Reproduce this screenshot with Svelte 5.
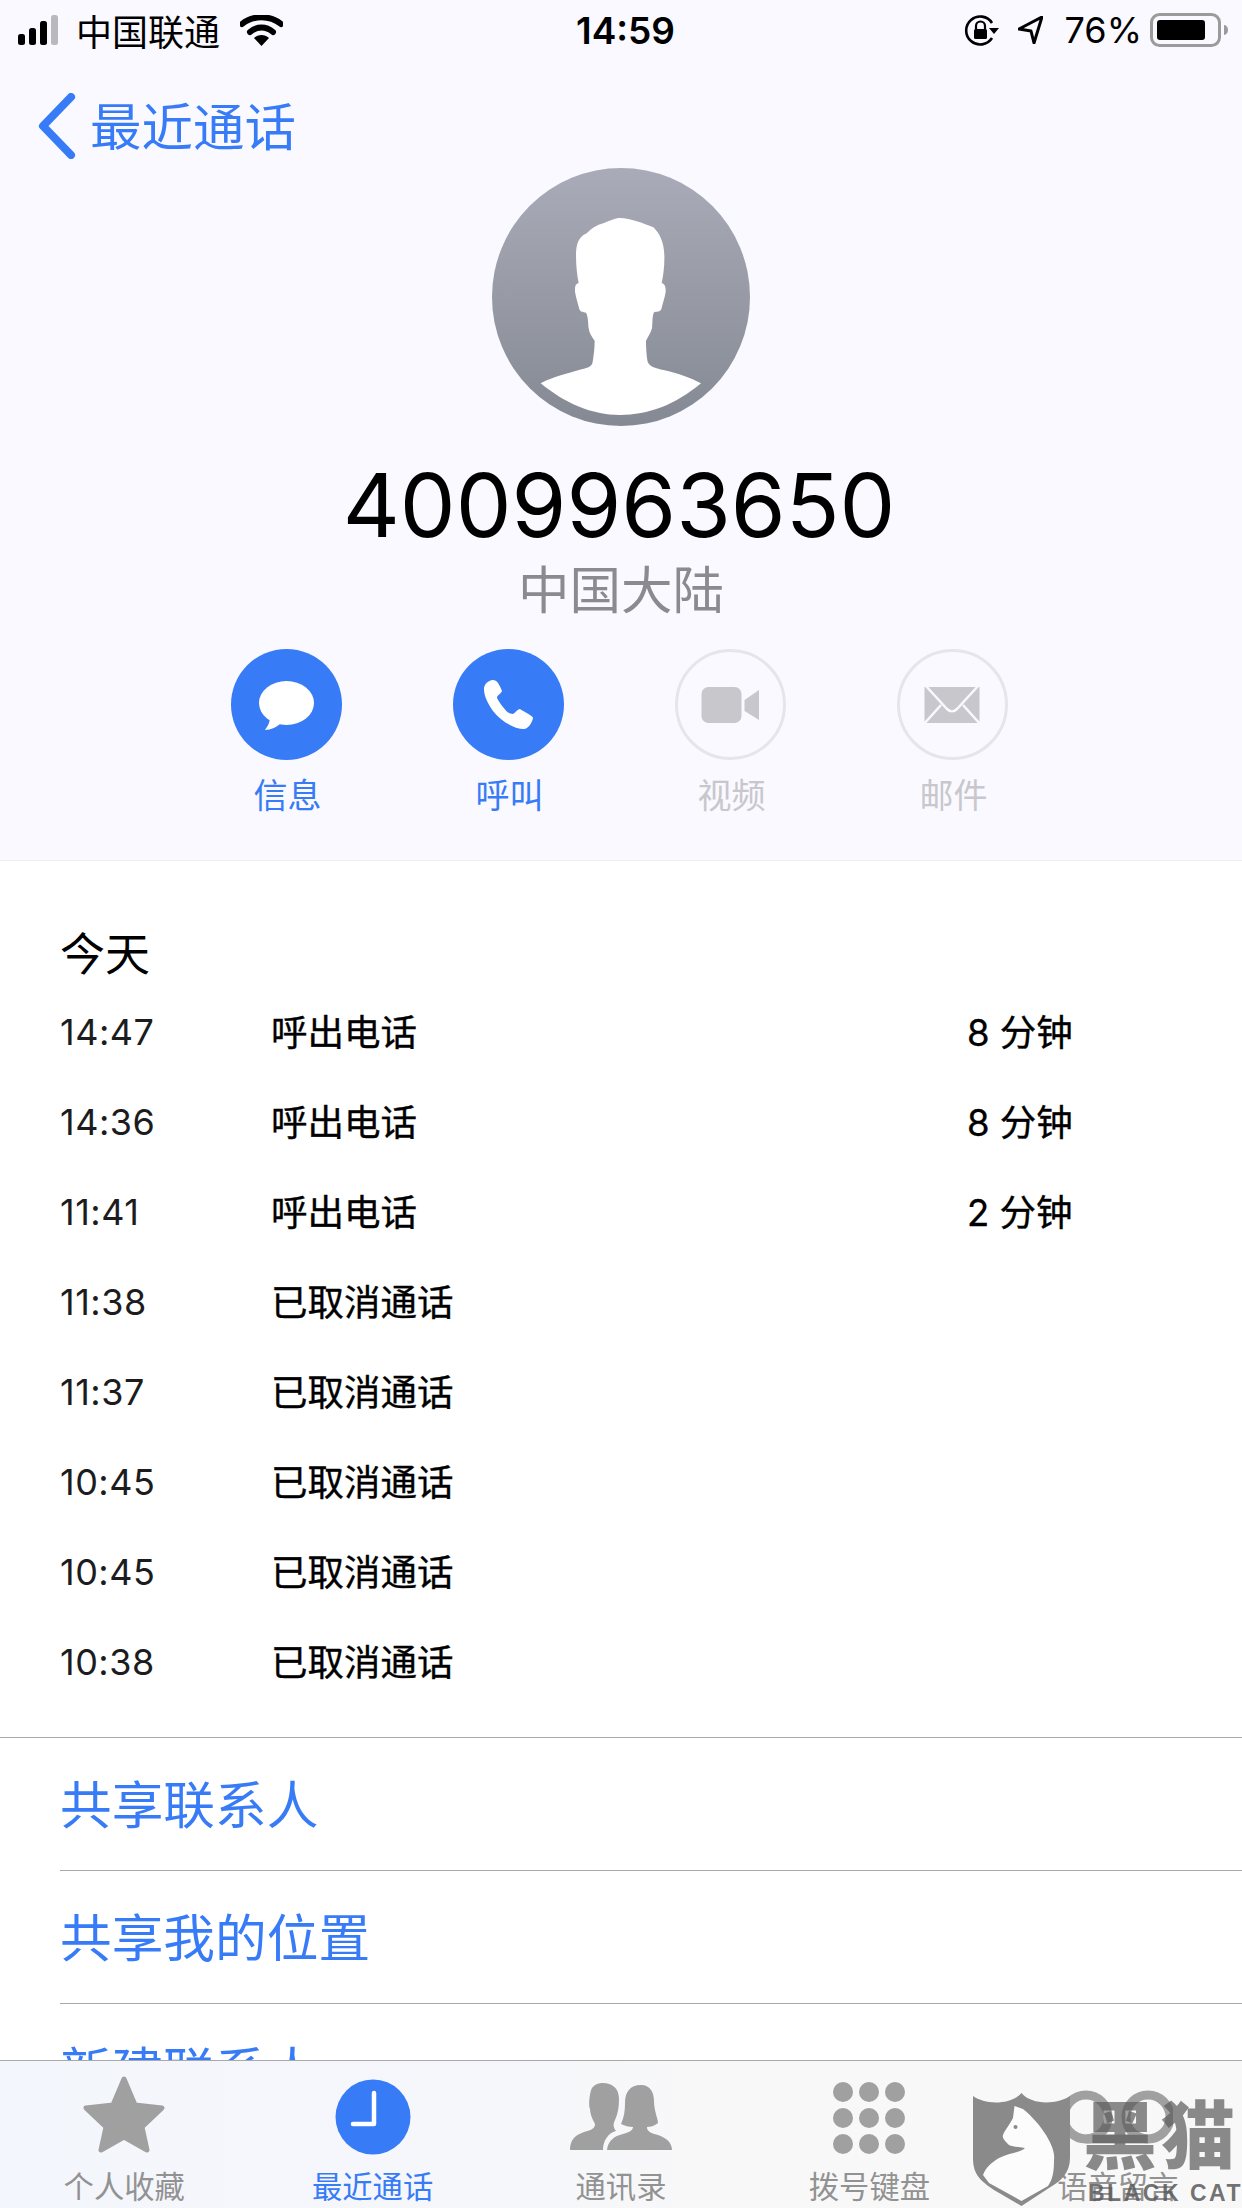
<script>
  const calls = [
    { time: '14:47', type: '呼出电话', length: '8 分钟' },
    { time: '14:36', type: '呼出电话', length: '8 分钟' },
    { time: '11:41', type: '呼出电话', length: '2 分钟' },
    { time: '11:38', type: '已取消通话', length: '' },
    { time: '11:37', type: '已取消通话', length: '' },
    { time: '10:45', type: '已取消通话', length: '' },
    { time: '10:45', type: '已取消通话', length: '' },
    { time: '10:38', type: '已取消通话', length: '' }
  ];
  const links = ['共享联系人', '共享我的位置', '新建联系人'];
  const dots = [29, 55, 81].flatMap((x) => [31, 57, 83].map((y) => ({ x, y })));
</script>

<div class="page">
  <div class="content">
    <header class="hero">
      <div class="status">
        <div class="status-left">
          <svg class="signal" width="40" height="30" viewBox="0 0 40 30">
            <rect x="0" y="19" width="7" height="11" rx="2.5" fill="#000" />
            <rect x="11" y="13" width="7" height="17" rx="2.5" fill="#000" />
            <rect x="22" y="6" width="7" height="24" rx="2.5" fill="#000" />
            <rect x="33" y="0" width="7" height="30" rx="2.5" fill="#b9b9bd" />
          </svg>
          <span class="carrier">中国联通</span>
          <svg class="wifi" width="43" height="31" viewBox="0 0 43 31">
            <path d="M2 9 C13 0 30 0 41 9" fill="none" stroke="#000" stroke-width="6" stroke-linecap="round" />
            <path d="M10 17 C17 11 26 11 33 17" fill="none" stroke="#000" stroke-width="6" stroke-linecap="round" />
            <path d="M14 23 C18 19 25 19 29 23 L21.5 31 Z" fill="#000" />
          </svg>
        </div>
        <span class="clock">14:59</span>
        <div class="status-right">
          <svg width="36" height="32" viewBox="0 0 36 32">
            <path d="M28 9 A14 14 0 1 0 28 24" fill="none" stroke="#000" stroke-width="2.6" />
            <path d="M25 14 L35 14 L30 20 Z" fill="#000" />
            <path d="M12 15 V12 a4.5 4.5 0 0 1 9 0 V15" fill="none" stroke="#000" stroke-width="2.2" />
            <rect x="10" y="15" width="13" height="10" rx="1.5" fill="#000" />
          </svg>
          <svg class="arrow" width="25" height="28" viewBox="0 0 25 28">
            <path d="M24 1 L1 13 L13 15 L16 27 Z" fill="none" stroke="#000" stroke-width="3" stroke-linejoin="round" />
          </svg>
          <span class="percent">76%</span>
          <svg width="78" height="34" viewBox="0 0 78 34">
            <rect x="1.5" y="1.5" width="68" height="31" rx="8" fill="none" stroke="#9b9b9b" stroke-width="3" />
            <rect x="7" y="7" width="48" height="20" rx="3" fill="#000" />
            <path d="M74 12 a4 5 0 0 1 0 10 Z" fill="#9b9b9b" />
          </svg>
        </div>
      </div>

      <nav class="nav">
        <svg width="38" height="66" viewBox="0 0 38 66">
          <polyline points="33,4 5,33 33,62" fill="none" stroke="#377bf7" stroke-width="8" stroke-linecap="round" stroke-linejoin="round" />
        </svg>
        <span class="nav-label">最近通话</span>
      </nav>

      <svg class="avatar" width="258" height="258" viewBox="156 54 774 774">
        <defs>
          <linearGradient id="avatar-fill" x1="0" y1="0" x2="0" y2="1">
            <stop offset="0" stop-color="#a9acb8" />
            <stop offset="1" stop-color="#858993" />
          </linearGradient>
        </defs>
        <circle cx="543" cy="441" r="387" fill="url(#avatar-fill)" />
        <path
          fill="#fff"
          d="M540 204 C570 204 610 220 640 232 C660 250 672 280 673 315 C674 345 670 375 665 400 C672 400 678 408 677 425 C674 445 668 460 664 478 C660 486 650 485 642 487 C636 500 638 520 636 535 C632 550 624 560 618 572 C618 595 620 620 623 635 C628 650 650 655 670 660 C715 670 755 685 783 700 C705 765 625 795 540 795 C455 795 375 760 302 700 C340 680 390 668 425 658 C445 652 456 650 458 635 C461 615 464 595 464 572 C455 560 448 550 446 535 C444 520 445 500 438 488 C430 486 422 488 418 478 C414 460 408 445 405 425 C404 408 408 400 416 400 C411 375 408 345 408 315 C408 285 415 260 440 250 C455 235 470 225 490 220 C510 212 525 204 540 204 Z"
        />
      </svg>

      <div class="number">4009963650</div>
      <div class="region">中国大陆</div>

      <div class="actions">
        <div class="action">
          <svg width="111" height="111" viewBox="0 0 111 111">
            <circle cx="55.5" cy="55.5" r="55.5" fill="#377bf7" />
            <ellipse cx="55.5" cy="54" rx="27.5" ry="22" fill="#fff" />
            <path d="M39 68 C39 74 36 78 34 81 C40 81 46 78 50 74 Z" fill="#fff" />
          </svg>
          <span>信息</span>
        </div>
        <div class="action">
          <svg width="111" height="111" viewBox="0 0 111 111">
            <circle cx="55.5" cy="55.5" r="55.5" fill="#377bf7" />
            <path fill="#fff" d="M39 31 C35 32 31 35 31 40 C31 47 35 55 40 62 C47 71 60 80 71 80 C75 80 79 74 80 69 C80 67 70 62 67 60 C65 60 63 63 60 65 C57 65 54 63 52.5 61 C49 57 46 53 44 49 C44 46 48 45 49 42 C48 39 45 33 43 32 C42 31 40 31 39 31 Z" />
          </svg>
          <span>呼叫</span>
        </div>
        <div class="action off">
          <svg width="111" height="111" viewBox="0 0 111 111">
            <circle cx="55.5" cy="55.5" r="54" fill="none" stroke="#e6e6ea" stroke-width="3" />
            <rect x="26.5" y="38" width="40" height="36" rx="7" fill="#c8c7cc" />
            <polygon points="69.5,51 84,41 84,71 69.5,62" fill="#c8c7cc" />
          </svg>
          <span>视频</span>
        </div>
        <div class="action off">
          <svg width="111" height="111" viewBox="0 0 111 111">
            <circle cx="55.5" cy="55.5" r="54" fill="none" stroke="#e6e6ea" stroke-width="3" />
            <rect x="27.5" y="38" width="55" height="36" fill="#c8c7cc" />
            <path d="M28 36 L50 60 C53 63 57 63 60 60 L82 36" fill="none" stroke="#f9f9ff" stroke-width="2.5" />
            <path d="M26 76 L44 56 M84 76 L66 56" fill="none" stroke="#f9f9ff" stroke-width="2.5" />
          </svg>
          <span>邮件</span>
        </div>
      </div>
    </header>

    <section class="calls">
      <h2>今天</h2>
      {#each calls as call}
        <div class="call">
          <span class="time">{call.time}</span>
          <span class="label">{call.type}</span>
          <span class="label">{call.length}</span>
        </div>
      {/each}
    </section>

    <ul class="links">
      {#each links as link}
        <li><span>{link}</span></li>
      {/each}
    </ul>
  </div>

  <footer class="tabs">
    <div class="tab">
      <svg width="110" height="108" viewBox="0 0 110 108">
        <polygon
          points="55,18 44,44 17,47 37,66 32,89 55,76 78,89 73,66 93,47 66,44"
          fill="#a0a0a0"
          stroke="#a0a0a0"
          stroke-width="5"
          stroke-linejoin="round"
        />
      </svg>
      <span>个人收藏</span>
    </div>
    <div class="tab active">
      <svg width="110" height="108" viewBox="0 0 110 108">
        <circle cx="55" cy="56" r="37.5" fill="#377bf7" />
        <path d="M56 32 V63 H35" fill="none" stroke="#fff" stroke-width="4.5" stroke-linecap="round" stroke-linejoin="round" />
      </svg>
      <span>最近通话</span>
    </div>
    <div class="tab">
      <svg width="110" height="108" viewBox="0 0 110 108">
        <g transform="translate(4 22)" fill="#a0a0a0">
          <path d="M33 0 C42 0 49 5 49 16 C49 24 48 30 45 37 C43 41 43 44 46 48 C38 50 33 58 33 67 L0 67 C0 56 6 52 14 49 C22 47 25 45 25 41 C22 36 20 30 20 26 C18 22 20 8 22 5 C25 1 29 0 33 0 Z" />
          <path d="M71 2 C80 2 84 9 84 18 C84 28 88 36 88 40 C84 43 80 44 77 44 C77 48 80 50 88 52 C97 55 102 60 102 67 L37 67 C38 58 44 53 53 51 C60 49 63 47 63 44 C59 44 55 43 51 41 C54 34 55 28 55 20 C55 9 60 2 71 2 Z" />
        </g>
      </svg>
      <span>通讯录</span>
    </div>
    <div class="tab">
      <svg width="110" height="108" viewBox="0 0 110 108">
        {#each dots as dot}
          <circle cx={dot.x} cy={dot.y} r="10" fill="#a0a0a0" />
        {/each}
      </svg>
      <span>拨号键盘</span>
    </div>
    <div class="tab">
      <svg width="110" height="108" viewBox="0 0 110 108">
        <g fill="none" stroke="#a0a0a0" stroke-width="9">
          <circle cx="23" cy="56" r="22" />
          <circle cx="85" cy="56" r="22" />
          <path d="M23 78 H85" />
        </g>
      </svg>
      <span>语音留言</span>
    </div>
  </footer>

  <div class="watermark">
    <svg class="shield" width="97" height="114" viewBox="0 0 97 114">
      <path d="M0 3 C12 12 38 12 48.5 0 C58 12 84 12 97 3 L97 65 C97 80 88 88 76 95 L48.5 113 L21 97 C8 88 0 82 0 65 Z" fill="#8a8a8a" />
      <path d="M41.5 13 L50 16 C60 24 68 34 73 42 C79 52 82 60 81 67 C81 78 80 86 75 93 L48.5 108 L16 90 L10 82 C13 74 18 70 26 65 C35 60 47 60 52 55 C46 54 40 54 36 52 C32 48 29 45 30 42 C32 37 37 31 40 25 Z" fill="#fcfcfc" />
      <circle cx="42.5" cy="34" r="2" fill="#8a8a8a" />
    </svg>
    <span class="wm-cn">黑猫</span>
    <span class="wm-en">BLACK CAT</span>
  </div>
</div>

<style>
  :global(body) {
    margin: 0;
    background: #fff;
  }

  .page {
    position: relative;
    display: flex;
    flex-direction: column;
    width: 1242px;
    height: 2208px;
    overflow: hidden;
    font-family: Inter, 'Noto Sans CJK SC', sans-serif;
    color: #000;
  }

  .content {
    flex: 1;
    min-height: 0;
    overflow: hidden;
  }

  .hero {
    display: flex;
    flex-direction: column;
    align-items: center;
    height: 860px;
    background: #f9f9ff;
    border-bottom: 1px solid #efeff3;
  }

  .status {
    position: relative;
    display: flex;
    align-items: center;
    justify-content: space-between;
    align-self: stretch;
    height: 60px;
    padding: 0 14px 0 18px;
    font-size: 36px;
  }

  .status-left,
  .status-right {
    display: flex;
    align-items: center;
  }

  .carrier {
    margin-left: 18px;
  }

  .wifi {
    margin-left: 20px;
  }

  .clock {
    position: absolute;
    left: 576px;
    font-size: 37px;
    font-weight: 600;
  }

  .arrow {
    margin-left: 18px;
  }

  .percent {
    margin: 0 8px 0 22px;
  }

  .nav {
    display: flex;
    align-items: center;
    gap: 14px;
    align-self: stretch;
    height: 68px;
    padding: 32px 0 0 38px;
    font-size: 51.5px;
    color: #377bf7;
  }

  .nav-label {
    padding-bottom: 6px;
  }

  .avatar {
    margin-top: 8px;
  }

  .number {
    margin: 28px 4px 0 0;
    font-size: 88.5px;
    line-height: 101px;
  }

  .region {
    font-size: 51.5px;
    line-height: 70px;
    color: #8a8a8f;
  }

  .actions {
    display: flex;
    justify-content: center;
    gap: 111px;
    margin: 24px 3px 0 0;
  }

  .action {
    display: flex;
    flex-direction: column;
    align-items: center;
    gap: 16px;
    font-size: 34px;
    line-height: 40px;
    color: #377bf7;
  }

  .action span {
    padding-left: 2px;
  }

  .action.off {
    color: #c8c7cc;
  }

  .calls {
    padding: 64px 0 30px 60px;
  }

  .calls h2 {
    margin: 0 0 2px;
    font-size: 45px;
    font-weight: 400;
    line-height: 60px;
  }

  .call {
    display: grid;
    grid-template-columns: 211px 696px 1fr;
    align-items: center;
    height: 90px;
    font-size: 36px;
  }

  .time {
    letter-spacing: 0.5px;
    color: #1c1c1e;
  }

  .label {
    padding-bottom: 4px;
    font-size: 36.5px;
    -webkit-text-stroke: 0.35px #000;
  }

  .links {
    margin: 0;
    padding: 0;
    list-style: none;
    border-top: 1px solid #a9a9a9;
  }

  .links li {
    margin-left: 60px;
    height: 132px;
    line-height: 134px;
    font-size: 51.7px;
    color: #377bf7;
    border-bottom: 1px solid #a9a9a9;
  }

  .tabs {
    display: grid;
    grid-template-columns: repeat(5, 1fr);
    flex: none;
    height: 147px;
    border-top: 1px solid #a9a9a9;
    background: linear-gradient(90deg, #f3f6fc 0%, #f6f7fb 40%, #f8f8f8 60%);
  }

  .tab {
    display: flex;
    flex-direction: column;
    align-items: center;
    font-size: 30.3px;
    line-height: 36px;
    color: #929292;
  }

  .tab svg {
    display: block;
  }

  .tab.active {
    color: #377bf7;
  }

  .watermark {
    position: absolute;
    left: 973px;
    top: 2093px;
    width: 269px;
    height: 115px;
  }

  .shield {
    position: absolute;
    left: 0;
    top: 0;
  }

  .wm-cn {
    position: absolute;
    left: 110px;
    top: -13px;
    font-size: 74px;
    font-weight: 900;
    line-height: 112px;
    letter-spacing: 4px;
    white-space: nowrap;
    color: rgba(90, 90, 90, 0.7);
  }

  .wm-en {
    position: absolute;
    left: 115px;
    top: 88px;
    font-family: 'Liberation Sans', sans-serif;
    font-size: 23px;
    font-weight: 700;
    line-height: 24px;
    letter-spacing: 2.5px;
    white-space: nowrap;
    color: rgba(90, 90, 90, 0.85);
  }
</style>
